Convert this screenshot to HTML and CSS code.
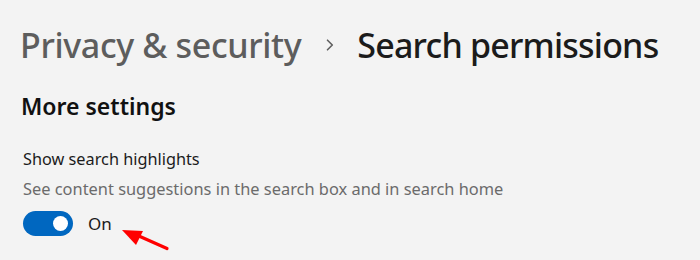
FILE: index.html
```html
<!DOCTYPE html>
<html>
<head>
<meta charset="utf-8">
<link rel="stylesheet" href="styles.css">
</head>
<body>
<div class="page">
  <header class="crumbs">
    <span class="crumb-parent">Privacy &amp; security</span>
    <svg class="chev" width="10" height="12" viewBox="0 0 10 12"><path d="M2.5 1.2 L7.3 6 L2.5 10.8" fill="none" stroke="#5f5f5f" stroke-width="1.6" stroke-linecap="round" stroke-linejoin="round"/></svg>
    <span class="crumb-current">Search permissions</span>
  </header>
  <h2 class="section">More settings</h2>
  <div class="setting">
    <div class="setting-title">Show search highlights</div>
    <div class="setting-desc">See content suggestions in the search box and in search home</div>
    <div class="toggle-row">
      <span class="toggle"><span class="knob"></span></span>
      <span class="toggle-label">On</span>
      <svg class="arrow" width="60" height="30" viewBox="0 0 60 30"><path d="M47 20.5 L20 8.5" stroke="#f00" stroke-width="3.2" stroke-linecap="round"/><path d="M2 2 L23 3 L16 17 Z" fill="#f00"/></svg>
    </div>
  </div>
</div>
</body>
</html>
```
FILE: styles.css
```css
html, body {
  margin: 0;
  padding: 0;
  background: #f3f3f3;
}
body {
  width: 700px;
  height: 260px;
  overflow: hidden;
  font-family: "Noto Sans", "Open Sans", sans-serif;
  color: #1b1b1b;
}
.page {
  padding: 20px 0 0 20px;
}
.crumbs {
  display: flex;
  align-items: center;
  height: 50px;
  white-space: nowrap;
}
.crumb-parent {
  font-size: 34px;
  font-weight: 500;
  letter-spacing: -0.35px;
  color: #5d5d5d;
}
.chev {
  margin: 0 22px 0 24px;
}
.crumb-current {
  font-size: 34px;
  font-weight: 500;
  letter-spacing: -0.8px;
  color: #1b1b1b;
}
.section {
  margin: 21px 0 0 1px;
  font-size: 23px;
  font-weight: 600;
  line-height: 30px;
  color: #111;
}
.setting {
  margin: 27px 0 0 3px;
}
.setting-title {
  font-size: 16.3px;
  line-height: 22px;
  color: #1b1b1b;
}
.setting-desc {
  margin-top: 8px;
  font-size: 16.4px;
  line-height: 22px;
  color: #6b6b6b;
}
.toggle-row {
  display: flex;
  align-items: center;
  margin-top: 11px;
  position: relative;
}
.toggle {
  width: 50px;
  height: 25px;
  border-radius: 13px;
  background: #0067c0;
  display: flex;
  align-items: center;
  justify-content: flex-end;
  padding-right: 5px;
  box-sizing: border-box;
}
.knob {
  width: 15px;
  height: 15px;
  border-radius: 50%;
  background: #fff;
}
.toggle-label {
  margin-left: 15px;
  font-size: 17px;
  color: #1b1b1b;
}
.arrow {
  position: absolute;
  left: 97px;
  top: 17px;
}
```
